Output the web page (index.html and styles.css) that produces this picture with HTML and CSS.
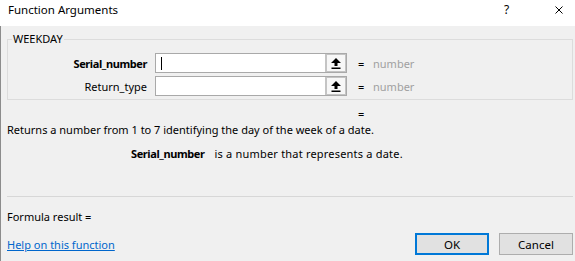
FILE: index.html
```html
<!DOCTYPE html>
<html>
<head>
<meta charset="utf-8">
<link rel="stylesheet" href="styles.css">
</head>
<body>
<div class="dialog">
  <div class="titlebar">
    <span class="title">Function Arguments</span>
    <span class="tb-help">?</span>
    <span class="tb-close"><svg width="8" height="8" viewBox="0 0 8 8"><path d="M0.5 0.5 L7.5 7.5 M7.5 0.5 L0.5 7.5" stroke="#000" stroke-width="1" fill="none"/></svg></span>
  </div>
  <div class="content">
    <fieldset class="group">
      <legend class="legend">WEEKDAY</legend>
      <div class="args">
        <div class="arg-label bold">Serial_number</div>
        <div class="arg-input">
          <div class="field"><span class="caret"></span></div>
          <div class="pick"><svg width="10" height="11" viewBox="0 0 10 11"><path d="M5 0 L10 5 L6.5 5 L6.5 8 L3.5 8 L3.5 5 L0 5 Z" fill="#000"/><rect x="0.5" y="9.5" width="9" height="1.5" fill="#000"/></svg></div>
        </div>
        <div class="arg-eq">=</div>
        <div class="arg-val">number</div>

        <div class="arg-label">Return_type</div>
        <div class="arg-input">
          <div class="field"></div>
          <div class="pick"><svg width="10" height="11" viewBox="0 0 10 11"><path d="M5 0 L10 5 L6.5 5 L6.5 8 L3.5 8 L3.5 5 L0 5 Z" fill="#000"/><rect x="0.5" y="9.5" width="9" height="1.5" fill="#000"/></svg></div>
        </div>
        <div class="arg-eq">=</div>
        <div class="arg-val">number</div>
      </div>
    </fieldset>
    <div class="result-eq">=</div>
    <div class="desc">Returns a number from 1 to 7 identifying the day of the week of a date.</div>
    <div class="param">
      <span class="bold">Serial_number</span>
      <span class="param-text">is a number that represents a date.</span>
    </div>
    <div class="spacer"></div>
    <div class="sep"></div>
    <div class="formula">Formula result =</div>
    <div class="bottom">
      <a class="help" href="#">Help on this function</a>
      <div class="buttons">
        <button class="btn btn-ok">OK</button>
        <button class="btn">Cancel</button>
      </div>
    </div>
  </div>
</div>
</body>
</html>
```
FILE: styles.css
```css
* { box-sizing: border-box; }
html, body { margin: 0; padding: 0; }
body {
  width: 575px;
  height: 261px;
  overflow: hidden;
  font-family: "Noto Sans", "Open Sans", sans-serif;
  font-size: 11px;
  color: #000;
}
.dialog {
  width: 575px;
  height: 261px;
  display: flex;
  flex-direction: column;
  background: #f0f0f0;
}
.titlebar {
  height: 26px;
  background: #fff;
  display: flex;
  align-items: flex-start;
  line-height: 20px;
  padding-left: 8px;
  font-size: 11.5px;
}
.title { flex: 1; }
.tb-help { width: 20px; margin-right: 31px; font-size: 12px; }
.tb-close { width: 20px; padding-top: 6px; line-height: 0; margin-right: 0; }
.content {
  flex: 1;
  display: flex;
  flex-direction: column;
  border-left: 1px solid #8c8c8c;
  padding: 0 2px 6px 6px;
}
.group {
  margin: 5px 0 0 0;
  padding: 6px 0 3px 0;
  border: 1px solid #dcdcdc;
  width: 566px;
  min-width: 0;
}
.legend {
  padding: 0 1px;
  margin-left: 4px;
  line-height: 16px;
}
.args {
  display: grid;
  grid-template-columns: 147px 192px 26px 1fr;
  grid-auto-rows: 20px;
  row-gap: 3px;
  align-items: center;
}
.arg-label {
  text-align: right;
  padding-right: 8px;
}
.bold { font-weight: bold; letter-spacing: -0.4px; }
.arg-input {
  height: 20px;
  display: flex;
  border: 1px solid #a9a9a9;
  background: #fff;
}
.field {
  flex: 1;
  display: flex;
  align-items: center;
  padding-left: 5px;
}
.caret {
  width: 1px;
  height: 13px;
  background: #000;
}
.pick {
  width: 21px;
  border: 2px solid #c4c4c4;
  border-right-width: 1px;
  border-top-width: 1px;
  border-bottom-width: 1px;
  background: #f7f7f7;
  display: flex;
  align-items: center;
  justify-content: center;
}
.arg-eq { padding-left: 11px; }
.arg-val { color: #a0a0a0; }
.result-eq {
  margin-top: 6px;
  line-height: 16px;
  padding-left: 351px;
}
.desc { line-height: 16px; margin-top: 0; }
.param {
  margin-top: 8px;
  line-height: 16px;
  display: flex;
  gap: 10px;
  padding-left: 124px;
}
.param-text { letter-spacing: 0.2px; }
.spacer { flex: 1; }
.sep {
  height: 1px;
  background: #d7d7d7;
  width: 566px;
}
.formula {
  margin-top: 12px;
  line-height: 16px;
}
.bottom {
  margin-top: 8px;
  display: flex;
  align-items: center;
  justify-content: space-between;
}
.help {
  color: #0066cc;
  text-decoration: underline;
}
.buttons {
  display: flex;
  gap: 10px;
}
.btn {
  width: 74px;
  height: 22px;
  font-family: inherit;
  font-size: 11.5px;
  background: #e1e1e1;
  border: 1px solid #adadad;
  padding: 0;
  color: #000;
}
.btn-ok { border: 2px solid #0078d7; }
```
